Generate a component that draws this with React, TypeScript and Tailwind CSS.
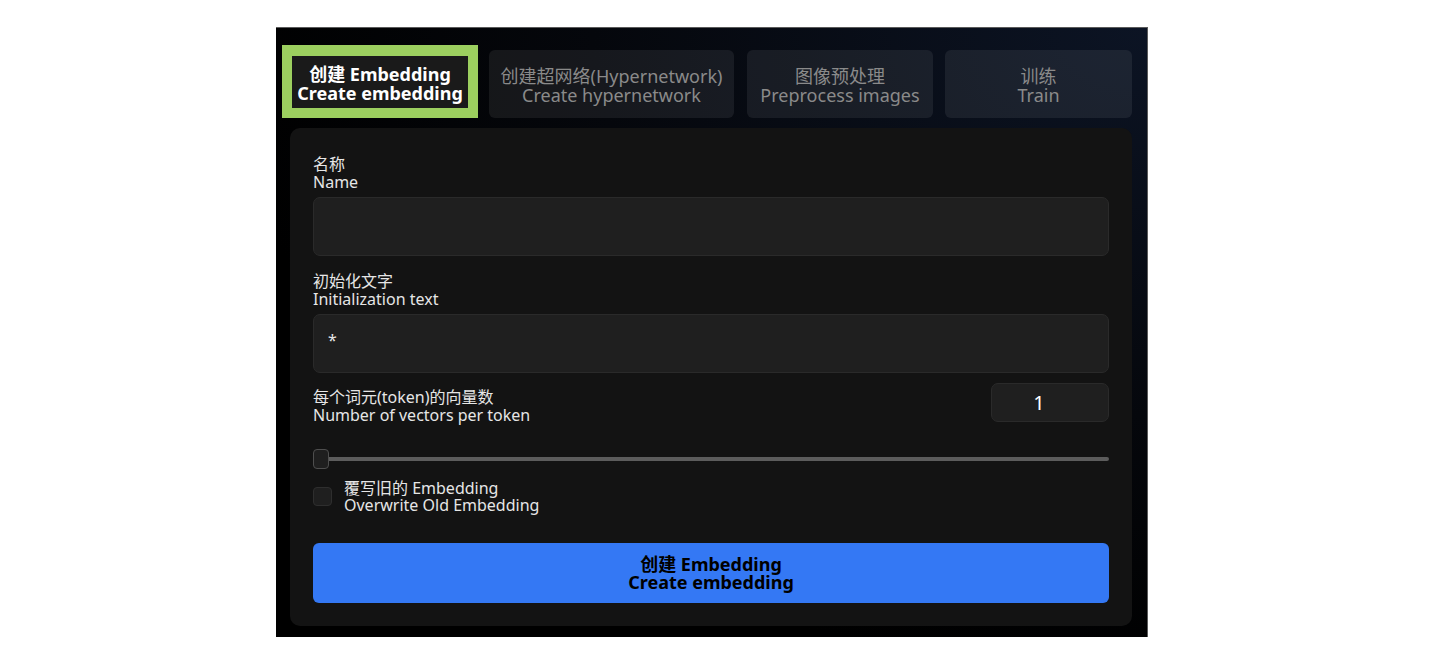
import React from "react";

const font = { fontFamily: '"Noto Sans", "Noto Sans CJK SC", sans-serif' };

const Field: React.FC<{ zh: string; en: string; value?: string; top: string }> = ({ zh, en, value, top }) => (
    <div className={top}>
        <div className="text-[16px] leading-[18px] text-[#e6e6e6]">
            <div>{zh}</div>
            <div>{en}</div>
        </div>
        <div className="mt-[6px] h-[59px] rounded-[7px] border border-[#2a2a2a] bg-[#1f1f1f] px-[14px] pt-[13px] text-[16px] text-[#e6e6e6]">
            {value}
        </div>
    </div>
);

const App: React.FC = () => {
    return (
        <div className="min-h-[661px] bg-white pt-[27px]" style={font}>
            <div className="ml-[276px] flex h-[610px] w-[872px] flex-col border-t border-r border-[#5a5a5a] bg-[radial-gradient(ellipse_at_top_right,#0c1424_0%,#05070c_45%,#000_75%)] pt-[17px]">
                {/* Tabs */}
                <div className="ml-[6px] flex items-end">
                    <div className="flex h-[73px] w-[196px] items-center justify-center bg-[#9ccf5f] p-[10px] pt-[11px]">
                        <div className="flex h-full w-full flex-col items-center justify-center bg-[#1a1a1a] pt-[3px] text-[18px] font-bold leading-[19px] text-white">
                            <span>创建 Embedding</span>
                            <span>Create embedding</span>
                        </div>
                    </div>
                    <div className="ml-[11px] flex h-[68px] w-[245px] flex-col items-center justify-center rounded-[6px] bg-white/[0.07] pt-[3px] text-[18px] leading-[19px] text-[#8a8a8a]">
                        <span>创建超网络(Hypernetwork)</span>
                        <span>Create hypernetwork</span>
                    </div>
                    <div className="ml-[13px] flex h-[68px] w-[186px] flex-col items-center justify-center rounded-[6px] bg-white/[0.07] pt-[3px] text-[18px] leading-[19px] text-[#8a8a8a]">
                        <span>图像预处理</span>
                        <span>Preprocess images</span>
                    </div>
                    <div className="ml-[12px] flex h-[68px] w-[187px] flex-col items-center justify-center rounded-[6px] bg-white/[0.07] pt-[3px] text-[18px] leading-[19px] text-[#8a8a8a]">
                        <span>训练</span>
                        <span>Train</span>
                    </div>
                </div>

                {/* Panel */}
                <div className="ml-[14px] mt-[10px] w-[842px] rounded-[10px] bg-[#131313] px-[23px] pb-[23px] pt-[27px]">
                    <Field zh="名称" en="Name" top="" />
                    <Field zh="初始化文字" en="Initialization text" value="*" top="mt-[16px]" />

                    <div className="mt-[10px] flex items-start justify-between">
                        <div className="mt-[5px] text-[16px] leading-[18px] text-[#e6e6e6]">
                            <div>每个词元(token)的向量数</div>
                            <div>Number of vectors per token</div>
                        </div>
                        <div className="flex h-[39px] w-[118px] items-center justify-center rounded-[7px] border border-[#2a2a2a] bg-[#1f1f1f] pr-[22px] text-[20px] text-white">
                            1
                        </div>
                    </div>

                    {/* Slider */}
                    <div className="mt-[25px] flex h-[20px] items-center">
                        <div className="h-[20px] w-[16px] shrink-0 rounded-[4px] border border-[#4e4e4e] bg-[#1f1f1f]" />
                        <div className="h-[4px] flex-1 rounded-r-full bg-[#5c5c5c]" />
                    </div>

                    {/* Checkbox */}
                    <div className="mt-[11px] flex items-start">
                        <div className="mt-[7px] h-[19px] w-[19px] rounded-[4px] border border-[#2e2e2e] bg-[#1f1f1f]" />
                        <div className="ml-[12px] text-[16px] leading-[17px] text-[#e6e6e6]">
                            <div>覆写旧的 Embedding</div>
                            <div>Overwrite Old Embedding</div>
                        </div>
                    </div>

                    <button className="mt-[29px] flex h-[60px] w-full flex-col items-center justify-center rounded-[6px] bg-[#3478f4] text-[18px] font-bold leading-[18px] text-black">
                        <span>创建 Embedding</span>
                        <span>Create embedding</span>
                    </button>
                </div>
            </div>
        </div>
    );
};

export default App;
